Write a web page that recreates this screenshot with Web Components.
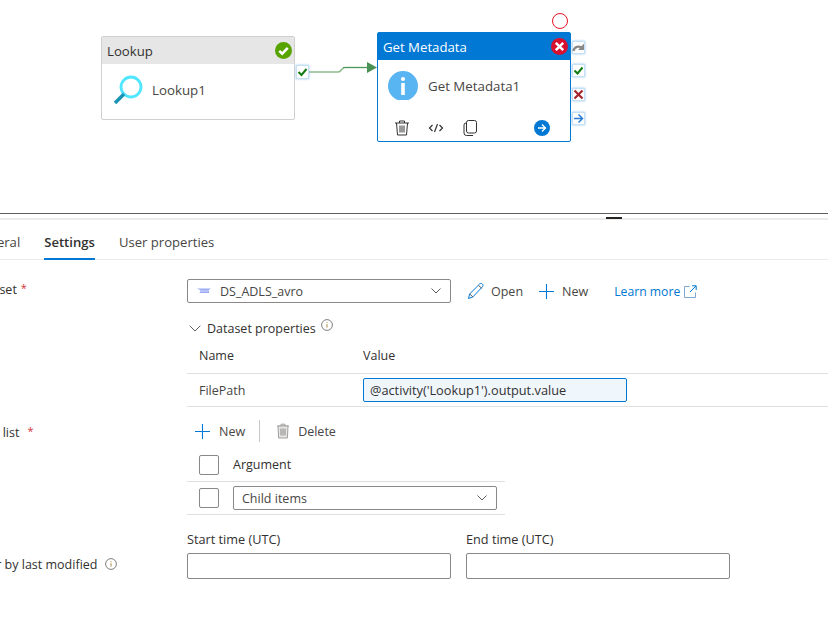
<!DOCTYPE html>
<html>
<head>
<meta charset="utf-8">
<style>
    html, body { margin: 0; padding: 0; background: #fff; overflow: hidden; }
    body { width: 828px; height: 637px; font-family: "Open Sans", "Liberation Sans", sans-serif; font-size: 12.5px; color: #323130; }
</style>
</head>
<body>
<pipeline-canvas>
    <activity-node kind="done" title="Lookup" name="Lookup1" style="left:101px;top:36px;width:194px;height:84px"></activity-node>
    <activity-node kind="selected" title="Get Metadata" name="Get Metadata1" style="left:377px;top:32px;width:194px;height:110px"></activity-node>
</pipeline-canvas>
<settings-panel>
    <form-row label="Dataset" required style="height:24px;margin-top:19px">
        <row-tools>
            <fake-select text="DS_ADLS_avro" dataset style="width:264px"></fake-select>
            <tool-button icon="pencil" style="margin-left:16px;--gap:7px">Open</tool-button>
            <tool-button icon="plus" style="margin-left:16px">New</tool-button>
            <learn-link style="margin-left:26px">Learn more</learn-link>
        </row-tools>
    </form-row>
    <dataset-props style="margin-top:14px"></dataset-props>
    <form-row label="Field list" required style="height:25px;margin-top:13px;--req-gap:8px" labeltop="4">
        <row-tools style="padding-left:8px;height:22px;">
            <tool-button icon="plus" style="--gap:9px">New</tool-button>
            <span-sep></span-sep>
            <tool-button icon="trash">Delete</tool-button>
        </row-tools>
    </form-row>
    <argument-list></argument-list>
    <form-row label="Filter by last modified" info style="margin-top:16px;height:48px" labeltop="25">
        <date-field label="Start time (UTC)"></date-field>
        <date-field label="End time (UTC)" style="margin-left:15px"></date-field>
    </form-row>
</settings-panel>

<script>
const ICONS = {
    pencil: '<svg width="17" height="17" viewBox="0 0 17 17" fill="none"><path d="M1.500 15.500l1.200-4.600L12.600 1c.8-.8 2-.8 2.800 0s.8 2 0 2.800L5.900 13.900z" stroke="#0078d4" stroke-width="1" stroke-linejoin="round"/><path d="M2.700 10.900l3.200 3M11.400 2.300l3.200 3" stroke="#605e5c" stroke-width="1"/></svg>',
    plus: '<svg width="15" height="15" viewBox="0 0 15 15"><path d="M7.500 0v15M0 7.500h15" stroke="#0078d4" stroke-width="1.100"/></svg>',
    trash: '<svg width="14" height="16" viewBox="0 0 14 16" fill="none"><path d="M1 3h12M5 3V1.200h4V3" stroke="#a19f9d"/><path d="M2 3l.6 12h8.800L12 3z" fill="#e8e6e4" stroke="#a19f9d"/><path d="M5 5.500v7M7 5.500v7M9 5.500v7" stroke="#8a8886"/></svg>',
    info: '<svg width="12" height="12" viewBox="0 0 12 12" fill="none"><circle cx="6" cy="6" r="5.400" stroke="#605e5c" stroke-width=".8"/><path d="M6 5.200v3.400M6 3.200v1" stroke="#a08030" stroke-width=".9"/></svg>',
    chevron: '<svg width="12" height="7" viewBox="0 0 12 7" fill="none"><path d="M.7.7L6 6l5.300-5.300" stroke="#605e5c" stroke-width="1"/></svg>',
    chevronSmall: '<svg width="10" height="6" viewBox="0 0 10 6" fill="none"><path d="M.5.5L5 5 9.500.5" stroke="#605e5c" stroke-width="1"/></svg>'
};

class PipelineCanvas extends HTMLElement {
    constructor() {
        super();
        this.attachShadow({mode: 'open'});
        this.shadowRoot.innerHTML = `
            <style>
                :host { display: block; position: relative; height: 213px; overflow: hidden; }
                svg { position: absolute; left: 0; top: 0; }
                .port { filter: drop-shadow(0 0 1px #8fc3ee); }
            </style>
            <slot></slot>
            <svg width="828" height="213" fill="none">
                <!-- connector between the two activities -->
                <path d="M308 72H338C342 72 341 67.500 345 67.500H368" stroke="#8cba8c" stroke-width="1.500"/>
                <path d="M343 67.500H368" stroke="#4b9a5b" stroke-width="1"/>
                <path d="M367 62l10 5.500-10 5.500z" fill="#4a9155"/>
                <circle cx="560" cy="21" r="7.500" stroke="#e81123" stroke-width="1"/>
                <!-- output port on Lookup -->
                <g class="port" transform="translate(296 65)">
                    <rect x=".5" y=".5" width="12" height="13" fill="#fff" stroke="#c7e0f4"/>
                    <path d="M2.500 7l3 3 5-6" stroke="#107c10" stroke-width="2"/>
                </g>
                <!-- ports on Get Metadata -->
                <g class="port" transform="translate(572 41)">
                    <rect x=".5" y=".5" width="12" height="12" fill="#fff" stroke="#c7e0f4"/>
                    <path d="M1.500 10c.5-4 5.500-6 9-3" stroke="#8a8886" stroke-width="2.200"/>
                    <path d="M12 2.500V9H6z" fill="#8a8886"/>
                </g>
                <g class="port" transform="translate(572 64)">
                    <rect x=".5" y=".5" width="12" height="12" fill="#fff" stroke="#c7e0f4"/>
                    <path d="M2.500 6.500l3 3 5-6" stroke="#107c10" stroke-width="2"/>
                </g>
                <g class="port" transform="translate(572 88)">
                    <rect x=".5" y=".5" width="12" height="12" fill="#fff" stroke="#c7e0f4"/>
                    <path d="M2.500 2.500l8 8M10.500 2.500l-8 8" stroke="#a4262c" stroke-width="2.200"/>
                </g>
                <g class="port" transform="translate(572 112)">
                    <rect x=".5" y=".5" width="12" height="12" fill="#fff" stroke="#c7e0f4"/>
                    <path d="M2 6.500h8M6.500 2.500l4 4-4 4" stroke="#2b7cd3" stroke-width="1.500"/>
                </g>
            </svg>
        `;
    }
}

class ActivityNode extends HTMLElement {
    constructor() {
        super();
        this.attachShadow({mode: 'open'});
    }

    connectedCallback() {
        const selected = this.getAttribute('kind') === 'selected';
        const status = selected
            ? '<svg class="status" width="17" height="17" viewBox="0 0 16 16"><circle cx="8" cy="8" r="8" fill="#d7102f"/><path d="M4.500 4.500l7 7M11.500 4.500l-7 7" stroke="#fff" stroke-width="2.400"/></svg>'
            : '<svg class="status" width="17" height="17" viewBox="0 0 16 16"><circle cx="8" cy="8" r="8" fill="#57a300"/><path d="M4 8.300l2.800 2.700L12 5.500" stroke="#fff" stroke-width="2.400" fill="none"/></svg>';
        const icon = selected
            ? '<svg width="30" height="29" viewBox="0 0 30 29"><circle cx="15" cy="15" r="15" fill="#59b4f2"/><rect x="13.200" y="12" width="3.600" height="12" fill="#fff"/><circle cx="15" cy="8" r="2.100" fill="#fff"/></svg>'
            : '<svg width="32" height="32" viewBox="0 0 32 32" fill="none"><circle cx="19" cy="13" r="10" stroke="#50e6ff" stroke-width="2.800"/><path d="M12 20L3 29" stroke="#1b93b5" stroke-width="3.500"/></svg>';
        const actions = selected ? `
            <div class="actions">
                <svg width="16" height="16" viewBox="0 0 16 16" fill="none" stroke="#323130"><path d="M1 3h14M5.500 3V1h5v2"/><path d="M2.500 3l1 12h9l1-12M6 5.500v7M8 5.500v7M10 5.500v7"/></svg>
                <svg style="margin-left:18px" width="16" height="16" viewBox="0 0 16 16" fill="none" stroke="#323130" stroke-width="1.200"><path d="M4.500 5l-3 3 3 3M11.500 5l3 3-3 3M9.500 4l-3 8"/></svg>
                <svg style="margin-left:19px" width="15" height="16" viewBox="0 0 15 16" fill="none" stroke="#323130"><rect x="3.500" y=".5" width="10" height="12.500" rx="2"/><path d="M3.500 3H3a2 2 0 0 0-2 2v8a2.500 2.500 0 0 0 2.500 2.500H10"/></svg>
                <svg style="margin-left:auto;margin-right:20px" width="16" height="16" viewBox="0 0 16 16" fill="none"><circle cx="8" cy="8" r="8" fill="#0078d4"/><path d="M4 8h7.500M8 4.500L11.500 8 8 11.500" stroke="#fff" stroke-width="1.300"/></svg>
            </div>` : '';
        this.shadowRoot.innerHTML = `
            <style>
                :host { position: absolute; box-sizing: border-box; display: flex; flex-direction: column; background: #fff;
                    border: 1px solid ${selected ? '#0078d4' : '#d2d0ce'}; border-radius: 2px; }
                .head { height: 27px; flex: none; display: flex; align-items: center; padding: 0 2px 0 5px;
                    background: ${selected ? '#0078d4' : '#e6e6e6'}; color: ${selected ? '#fff' : '#323130'}; font-size: 13.2px; }
                .status { margin-left: auto; }
                .body { display: flex; align-items: flex-start; padding: ${selected ? '11px 0 0 10px' : '10px 0 0 10px'}; }
                .name { font-size: 13.3px; color: #484644; margin-left: ${selected ? '10px' : '8px'}; margin-top: ${selected ? '6px' : '7px'}; }
                .icon { display: block; height: ${selected ? '29px' : '32px'}; }
                .actions { display: flex; align-items: center; padding: 0 0 0 16px; margin-top: 20px; }
            </style>
            <div class="head"><span>${this.getAttribute('title')}</span>${status}</div>
            <div class="body"><div class="icon">${icon}</div><div class="name">${this.getAttribute('name')}</div></div>
            ${actions}
        `;
    }
}

class SettingsPanel extends HTMLElement {
    constructor() {
        super();
        this.attachShadow({mode: 'open'});
        this.shadowRoot.innerHTML = `
            <style>
                :host { display: block; position: relative; height: 424px; overflow: hidden; border-top: 1px solid #605e5c; box-sizing: border-box; }
                .grip { position: absolute; left: 606px; top: 3px; width: 16px; height: 2px; background: #252423; }
                .band { height: 2px; margin-top: 4px; background: #edebe9; }
                .tabs { display: flex; height: 40px; box-sizing: border-box; border-bottom: 1px solid #edebe9; margin-left: -28px; font-size: 13.100px; }
                .tab { padding-top: 13px; box-sizing: border-box; height: 40px; margin-right: 24px; color: #484644; }
                .tab.on { font-weight: 600; color: #323130; border-bottom: 2px solid #0078d4; }
            </style>
            <div class="grip"></div>
            <div class="band"></div>
            <div class="tabs">
                <div class="tab">General</div>
                <div class="tab on">Settings</div>
                <div class="tab">User properties</div>
            </div>
            <slot></slot>
        `;
    }
}

class FormRow extends HTMLElement {
    constructor() {
        super();
        this.attachShadow({mode: 'open'});
    }

    connectedCallback() {
        const req = this.hasAttribute('required') ? '<span class="req">*</span>' : '';
        const info = this.hasAttribute('info') ? `<span class="info">${ICONS.info}</span>` : '';
        const top = this.getAttribute('labeltop') || 2;
        this.shadowRoot.innerHTML = `
            <style>
                :host { display: flex; margin-left: -28px; }
                .label { width: 215px; flex: none; padding-top: ${top}px; box-sizing: border-box; color: #323130; font-weight: 500; white-space: nowrap; }
                .req { color: #d13438; font-size: 11px; margin-left: var(--req-gap, 4px); position: relative; top: -2px; }
                .info { position: relative; top: -2px; margin-left: 8px; }
                .info svg { vertical-align: middle; }
                .content { display: flex; flex: 1; align-items: flex-start; }
            </style>
            <div class="label">${this.getAttribute('label')}${req}${info}</div>
            <div class="content"><slot></slot></div>
        `;
    }
}

class RowTools extends HTMLElement {
    constructor() {
        super();
        this.attachShadow({mode: 'open'});
        this.shadowRoot.innerHTML = `
            <style>:host { display: flex; align-items: center; }</style>
            <slot></slot>
        `;
    }
}

class SpanSep extends HTMLElement {
    constructor() {
        super();
        this.attachShadow({mode: 'open'});
        this.shadowRoot.innerHTML = `
            <style>:host { display: block; width: 1px; height: 22px; background: #c8c6c4; margin: 0 16px 0 14px; }</style>
        `;
    }
}

class ToolButton extends HTMLElement {
    constructor() {
        super();
        this.attachShadow({mode: 'open'});
    }

    connectedCallback() {
        this.shadowRoot.innerHTML = `
            <style>
                :host { display: inline-flex; align-items: center; color: #484644; }
                svg { display: block; }
                span { margin-left: var(--gap, 8px); }
            </style>
            ${ICONS[this.getAttribute('icon')]}<span><slot></slot></span>
        `;
    }
}

class LearnLink extends HTMLElement {
    constructor() {
        super();
        this.attachShadow({mode: 'open'});
        this.shadowRoot.innerHTML = `
            <style>
                :host { display: inline-flex; align-items: center; color: #0078d4; white-space: nowrap; font-size: 12.2px; }
                svg { margin-left: 4px; display: block; }
            </style>
            <slot></slot>
            <svg width="13" height="13" viewBox="0 0 13 13" fill="none">
                <path d="M5.500 1.500H.5v11h11V7.500" stroke="#7fa8d0"/>
                <path d="M6 7l6-6M8 .8h4.200V5" stroke="#0078d4"/>
            </svg>
        `;
    }
}

class FakeSelect extends HTMLElement {
    constructor() {
        super();
        this.attachShadow({mode: 'open'});
    }

    connectedCallback() {
        const mark = this.hasAttribute('dataset')
            ? '<svg width="14" height="6" viewBox="0 0 14 6" style="margin:0 9px 0 1px"><path d="M0 .5h14l-2.500 1.800.8 2.700H2.700l.8-2.700z" fill="#9aaaf5"/><path d="M3 3h8" stroke="#d4dcfb"/></svg>'
            : '';
        this.shadowRoot.innerHTML = `
            <style>
                :host { display: flex; align-items: center; box-sizing: border-box; height: 24px; border: 1px solid #8a8886; border-radius: 2px;
                    padding: 0 9px 0 8px; color: #484644; background: #fff; }
                .chev { margin-left: auto; display: block; }
                .txt { position: relative; top: .5px; }
                svg { display: block; }
            </style>
            ${mark}<span class="txt">${this.getAttribute('text')}</span><span class="chev">${ICONS.chevronSmall}</span>
        `;
    }
}

class DatasetProps extends HTMLElement {
    constructor() {
        super();
        this.attachShadow({mode: 'open'});
        this.shadowRoot.innerHTML = `
            <style>
                :host { display: block; margin-left: 187px; }
                svg { display: block; }
                .title { display: flex; align-items: center; height: 22px; padding-left: 2px; font-weight: 500; color: #323130; }
                .title span.t { margin-left: 6px; }
                .title span.i { margin: -7px 0 0 5px; }
                .row { display: grid; grid-template-columns: 164px 264px; align-items: center; box-sizing: border-box; border-bottom: 1px solid #e1dfdd; padding-left: 12px; }
                .row.head { height: 35px; font-weight: 500; padding-bottom: 1px; }
                .row.data { height: 33px; color: #484644; }
                .value { box-sizing: border-box; height: 24px; line-height: 22px; padding-left: 6px; border: 1px solid #0078d4; border-radius: 2px;
                    background: #eff6fc; color: #323130; white-space: nowrap; overflow: hidden; font-size: 12.75px; }
            </style>
            <div class="title">${ICONS.chevron}<span class="t">Dataset properties</span><span class="i">${ICONS.info}</span></div>
            <div class="row head"><div>Name</div><div>Value</div></div>
            <div class="row data"><div>FilePath</div><div class="value">@activity('Lookup1').output.value</div></div>
        `;
    }
}

class ArgumentList extends HTMLElement {
    constructor() {
        super();
        this.attachShadow({mode: 'open'});
        this.shadowRoot.innerHTML = `
            <style>
                :host { display: block; margin-left: 187px; width: 318px; }
                .row { display: flex; align-items: center; box-sizing: border-box; padding-left: 12px; border-bottom: 1px solid #e1dfdd; }
                .box { width: 20px; height: 20px; box-sizing: border-box; border: 1px solid #8a8886; border-radius: 2px; margin-right: 14px; flex: none; }
                .head { height: 37px; font-weight: 500; padding-top: 3px; }
                .data { height: 33px; }
            </style>
            <div class="row head"><div class="box"></div>Argument</div>
            <div class="row data"><div class="box"></div><fake-select text="Child items" style="width:264px"></fake-select></div>
        `;
    }
}

class DateField extends HTMLElement {
    constructor() {
        super();
        this.attachShadow({mode: 'open'});
    }

    connectedCallback() {
        this.shadowRoot.innerHTML = `
            <style>
                :host { display: block; width: 264px; }
                .lab { height: 22px; line-height: 17px; color: #323130; font-weight: 500; font-size: 12.7px; }
                .box { box-sizing: border-box; height: 26px; border: 1px solid #8a8886; border-radius: 2px; }
            </style>
            <div class="lab">${this.getAttribute('label')}</div>
            <div class="box"></div>
        `;
    }
}

customElements.define('pipeline-canvas', PipelineCanvas);
customElements.define('activity-node', ActivityNode);
customElements.define('settings-panel', SettingsPanel);
customElements.define('form-row', FormRow);
customElements.define('row-tools', RowTools);
customElements.define('span-sep', SpanSep);
customElements.define('tool-button', ToolButton);
customElements.define('learn-link', LearnLink);
customElements.define('fake-select', FakeSelect);
customElements.define('dataset-props', DatasetProps);
customElements.define('argument-list', ArgumentList);
customElements.define('date-field', DateField);
</script>
</body>
</html>
